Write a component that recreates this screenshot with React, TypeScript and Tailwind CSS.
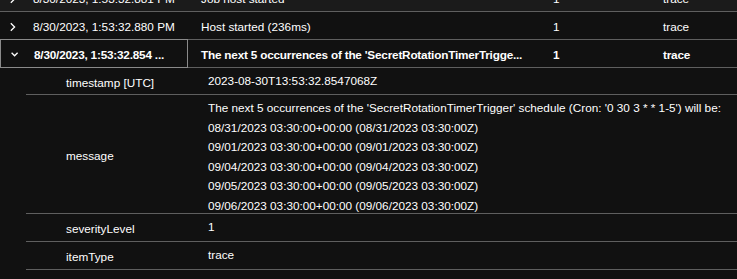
import type { ReactNode } from "react";

type Row = {
	time: string;
	message: string;
	count: string;
	type: string;
	open?: boolean;
	hover?: boolean;
};

const rows: Row[] = [
	{
		time: "8/30/2023, 1:53:32.881 PM",
		message: "Job host started",
		count: "1",
		type: "trace",
		hover: true,
	},
	{
		time: "8/30/2023, 1:53:32.880 PM",
		message: "Host started (236ms)",
		count: "1",
		type: "trace",
	},
	{
		time: "8/30/2023, 1:53:32.854 ...",
		message: "The next 5 occurrences of the 'SecretRotationTimerTrigge...",
		count: "1",
		type: "trace",
		open: true,
	},
];

const messageLines = [
	"The next 5 occurrences of the 'SecretRotationTimerTrigger' schedule (Cron: '0 30 3 * * 1-5') will be:",
	"08/31/2023 03:30:00+00:00 (08/31/2023 03:30:00Z)",
	"09/01/2023 03:30:00+00:00 (09/01/2023 03:30:00Z)",
	"09/04/2023 03:30:00+00:00 (09/04/2023 03:30:00Z)",
	"09/05/2023 03:30:00+00:00 (09/05/2023 03:30:00Z)",
	"09/06/2023 03:30:00+00:00 (09/06/2023 03:30:00Z)",
];

function Chevron({ open }: { open?: boolean }) {
	return (
		<svg width="10" height="10" viewBox="0 0 10 10" className="shrink-0">
			{open ? (
				<path d="M1.6 2.8 4.6 5.8 7.6 2.8" fill="none" stroke="#fff" strokeWidth="1.3" />
			) : (
				<path d="M1.8 1.2 5.6 5 1.8 8.8" fill="none" stroke="#fff" strokeWidth="1.3" />
			)}
		</svg>
	);
}

function DetailRow({ label, children, h }: { label: string; children: ReactNode; h: string }) {
	return (
		<div className={`flex border-b border-[#5f5f5f] ${h}`}>
			<div className="flex w-[182px] shrink-0 items-center pl-10 pt-[3px]">{label}</div>
			<div className="pt-[3px] leading-[19.5px]">{children}</div>
		</div>
	);
}

export default function App() {
	return (
		<div
			className="h-[279px] w-[737px] overflow-hidden bg-[#111111] text-[11.75px] leading-[16px] text-white"
			style={{ fontFamily: '"Liberation Sans", Arial, sans-serif' }}
		>
			<div className="-mt-[16px]">
				{rows.map((r) => (
					<div
						key={r.time}
						className={`flex h-[28px] border-b border-[#5f5f5f] pt-[3px] ${r.hover ? "bg-[#1b1b1b]" : ""} ${r.open ? "font-bold tracking-[-0.2px]" : ""}`}
					>
						<div
							className={`flex w-[188px] shrink-0 items-center gap-[14px] pl-[9px] ${r.open ? "-mt-[4px] -mb-px border border-[#8a8a8a] pl-[8px] pt-[3px]" : ""}`}
						>
							<Chevron open={r.open} />
							<span className="whitespace-nowrap">{r.time}</span>
						</div>
						<div className="flex w-[352px] shrink-0 items-center overflow-hidden whitespace-nowrap pl-[13px]">
							{r.message}
						</div>
						<div className="flex w-[110px] shrink-0 items-center pl-[13px]">{r.count}</div>
						<div className="flex items-center pl-[13px]">{r.type}</div>
					</div>
				))}
			</div>
			<div className="ml-[26px]">
				<DetailRow label="timestamp [UTC]" h="h-[27px]">
					2023-08-30T13:53:32.8547068Z
				</DetailRow>
				<DetailRow label="message" h="h-[119px]">
					{messageLines.map((l) => (
						<div key={l} className="whitespace-nowrap">
							{l}
						</div>
					))}
				</DetailRow>
				<DetailRow label="severityLevel" h="h-[28px]">
					1
				</DetailRow>
				<DetailRow label="itemType" h="h-[28px]">
					trace
				</DetailRow>
			</div>
		</div>
	);
}
